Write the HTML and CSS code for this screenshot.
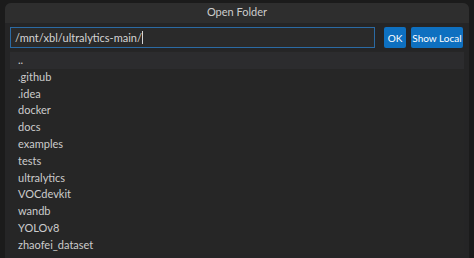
FILE: index.html
```html
<!DOCTYPE html>
<html>
<head>
	<title>Open Folder</title>
	<link rel="stylesheet" href="styles.css">
</head>
<body>
	<div class="dialog">
		<div class="title">Open Folder</div>
		<div class="bar">
			<div class="input">/mnt/xbl/ultralytics-main/<span class="caret"></span></div>
			<button class="btn ok">OK</button>
			<button class="btn local">Show Local</button>
		</div>
		<ul class="list">
			<li class="active">..</li>
			<li>.github</li>
			<li>.idea</li>
			<li>docker</li>
			<li>docs</li>
			<li>examples</li>
			<li>tests</li>
			<li>ultralytics</li>
			<li>VOCdevkit</li>
			<li>wandb</li>
			<li>YOLOv8</li>
			<li>zhaofei_dataset</li>
		</ul>
	</div>
</body>
</html>
```
FILE: styles.css
```css
*{margin: 0;
	padding: 0;
	list-style: none;
	box-sizing: border-box;
}
body{
	background: #1b1b1b;
	font-family: Lato, "Open Sans", sans-serif;
	font-size: 11px;
	color: #cccccc;
	height: 258px;
	overflow: hidden;
}
.dialog{
	margin: 3px 5px 0 5px;
	height: 255px;
	background: #252526;
	border-radius: 6px 6px 0 0;
	overflow: hidden;
}
.title{
	height: 20px;
	line-height: 18px;
	text-align: center;
	background: #2e2e2e;
	color: #cccccc;
}
.bar{
	display: flex;
	padding: 4px 6px 0 5px;
	gap: 5px;
}
.input{
	flex: 1;
	height: 21px;
	line-height: 19px;
	border: 1px solid #2b6aa3;
	background: #2a2a2a;
	padding-left: 4px;
	color: #d4d4d4;
	margin-right: 4px;
}
.caret{
	display: inline-block;
	width: 1px;
	height: 13px;
	background: #d4d4d4;
	vertical-align: -2px;
}
.btn{
	height: 21px;
	border: none;
	background: #0e70c0;
	color: #ffffff;
	font-family: inherit;
	font-size: 10px;
	padding: 0;
	border-radius: 2px;
	white-space: nowrap;
}
.btn.ok{
	width: 22px;
}
.btn.local{
	width: 52px;
}
.list{
	margin: 3px 5px 0 5px;
	background: #262626;
	padding-top: 1px;
}
.list li{
	height: 16.8px;
	line-height: 16px;
	padding-left: 8px;
	color: #cccccc;
}
.list li.active{
	background: #2c2c2e;
}
```
